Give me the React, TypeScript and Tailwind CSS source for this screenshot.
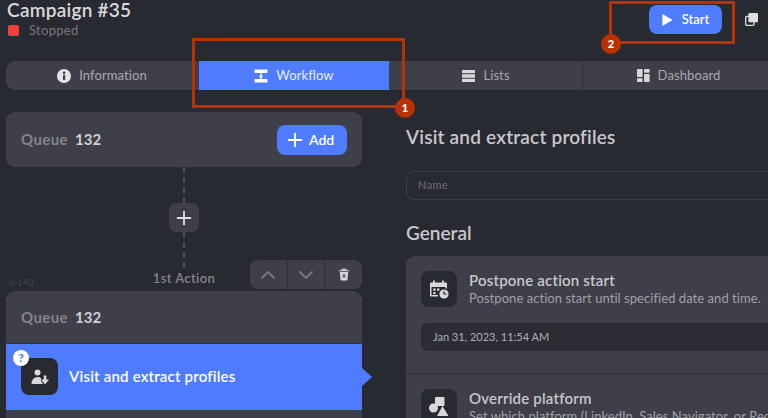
import { ChevronUp, ChevronDown, Plus } from 'lucide-react'

const font = { fontFamily: 'Lato, sans-serif' }

function InfoIcon() {
  return (
    <svg viewBox="0 0 14 14" className="w-[14px] h-[14px]">
      <circle cx="7" cy="7" r="7" fill="#e4e4e6" />
      <rect x="6" y="6" width="2.2" height="5" fill="#3e3f48" />
      <circle cx="7.1" cy="3.9" r="1.3" fill="#3e3f48" />
    </svg>
  )
}

function WorkflowIcon() {
  return (
    <svg viewBox="0 0 14 14" className="w-[14px] h-[14px]" fill="#fff">
      <rect x="0.5" y="0.5" width="13" height="3.6" rx="0.8" />
      <rect x="0.5" y="10" width="13" height="3.6" rx="0.8" />
      <rect x="6.4" y="4" width="1.2" height="6" />
      <path d="M4.8 6.8h4.4L7 9.4z" />
    </svg>
  )
}

function ListIcon() {
  return (
    <svg viewBox="0 0 14 14" className="w-[13px] h-[14px]" fill="#d8d8da">
      <rect x="0" y="0.5" width="14" height="3.6" rx="0.6" />
      <rect x="0" y="5.2" width="14" height="3.6" rx="0.6" />
      <rect x="0" y="9.9" width="14" height="3.6" rx="0.6" />
    </svg>
  )
}

function DashboardIcon() {
  return (
    <svg viewBox="0 0 14 14" className="w-[13px] h-[13px]" fill="#d8d8da">
      <rect x="0" y="0" width="6" height="8.5" rx="0.8" />
      <rect x="0" y="10" width="6" height="4" rx="0.8" />
      <rect x="7.6" y="0" width="6" height="4" rx="0.8" />
      <rect x="7.6" y="5.5" width="6" height="8.5" rx="0.8" />
    </svg>
  )
}

function CopyIcon() {
  return (
    <svg viewBox="0 0 14 14" className="w-[13px] h-[13px]">
      <rect x="0.7" y="3.7" width="9" height="9.6" rx="1.2" fill="none" stroke="#e0e0e2" strokeWidth="1.4" />
      <rect x="3.6" y="0" width="10.4" height="10" rx="1.4" fill="#e0e0e2" />
    </svg>
  )
}

function TrashIcon() {
  return (
    <svg viewBox="0 0 14 14" className="w-[12px] h-[13px]">
      <path d="M1 2.6h12M5 2.4V1h4v1.4" fill="none" stroke="#d8d8da" strokeWidth="1.3" />
      <path d="M2.2 4h9.6l-.7 9.2a.8.8 0 0 1-.8.8H3.7a.8.8 0 0 1-.8-.8z" fill="#d8d8da" />
      <path d="M5.3 6.7l3.4 3.8M8.7 6.7l-3.4 3.8" stroke="#3e3f48" strokeWidth="1.2" />
    </svg>
  )
}

function ExtractIcon() {
  return (
    <svg viewBox="0 0 18 16" className="w-[18px] h-[16px]" fill="#d8d8da">
      <circle cx="6.5" cy="3.5" r="3" />
      <path d="M0.5 15c0-4 2.5-7 6-7 1.5 0 2.6.4 3.5 1.2V12l2 3z" />
      <path d="M12.7 6.5h2.6v4h2.7l-4 5-4-5h2.700z" />
    </svg>
  )
}

function CalendarIcon() {
  return (
    <svg viewBox="0 0 20 20" className="w-[20px] h-[20px]">
      <path d="M1 4.5a1 1 0 0 1 1-1h15a1 1 0 0 1 1 1v5h-1.500V8H2.500v8h6.500v1.500H2a1 1 0 0 1-1-1z" fill="#d8d8da" />
      <rect x="4" y="1.5" width="1.8" height="3.5" fill="#d8d8da" />
      <rect x="13" y="1.5" width="1.8" height="3.5" fill="#d8d8da" />
      <rect x="4.2" y="9.5" width="2.4" height="2.2" fill="#d8d8da" />
      <rect x="8" y="9.5" width="2.4" height="2.2" fill="#d8d8da" />
      <rect x="4.2" y="13" width="2.4" height="2.2" fill="#d8d8da" />
      <circle cx="15" cy="15" r="4.6" fill="#d8d8da" />
      <path d="M15 12.3V15h2.6" fill="none" stroke="#282a32" strokeWidth="1.2" />
    </svg>
  )
}

function ShapesIcon() {
  return (
    <svg viewBox="0 0 20 20" className="w-[20px] h-[20px]" fill="#d8d8da">
      <rect x="6" y="0" width="9.5" height="9" rx="1" />
      <circle cx="4.5" cy="11" r="4.5" />
      <path d="M13.5 9l6 10H8z" />
    </svg>
  )
}

function Badge({ n, className }: { n: string; className: string }) {
  return (
    <div
      className={`absolute w-[20px] h-[20px] rounded-full bg-[#b83200] text-white text-[11px] font-black flex items-center justify-center ${className}`}
    >
      {n}
    </div>
  )
}

function QueueLabel() {
  return (
    <div className="flex items-baseline gap-[7px] text-[15px] tracking-[0.4px]">
      <span className="text-[#85858b] font-bold">Queue</span>
      <span className="text-[#d0d0d3] font-bold tracking-[0.1px]">132</span>
    </div>
  )
}

function DashedLine({ h }: { h: string }) {
  return <div className={`w-0 border-l-2 border-dashed border-[#4a4b53] ${h}`} />
}

export default function App() {
  return (
    <div className="relative w-[768px] h-[418px] overflow-hidden bg-[#282a32] text-[#d8d8da]" style={font}>
      {/* Header */}
      <div className="flex justify-between h-[61px]">
        <div className="pl-[7px]">
          <div className="text-[19px] leading-[20px] font-semibold text-[#d8d8da] tracking-[0.25px]">Campaign #35</div>
          <div className="flex items-center gap-[10px] mt-[2px] pl-[1px]">
            <div className="w-[11px] h-[11px] rounded-[2px] bg-[#f0403c]" />
            <span className="text-[13px] leading-[16px] text-[#78787e] tracking-[0.3px]">Stopped</span>
          </div>
        </div>
        <div className="flex items-start pt-[5px] pr-[10px] gap-[23px]">
          <button className="w-[73px] h-[29px] rounded-[8px] bg-[#4f7cff] flex items-center justify-center gap-[9px] text-white text-[13px] font-semibold">
            <svg viewBox="0 0 12 14" className="w-[11px] h-[12px]" fill="#fff"><path d="M0 0l12 7-12 7z" /></svg>
            Start
          </button>
          <div className="pt-[8px]"><CopyIcon /></div>
        </div>
      </div>

      {/* Tabs */}
      <div className="flex w-[768px] h-[29px] pl-[6px] text-[13px] tracking-[0.1px] text-[#a8a8ad]">
        <div className="w-[192px] shrink-0 rounded-l-[9px] bg-[#3e3f48] flex items-center justify-center gap-[8px]">
          <InfoIcon />Information
        </div>
        <div className="w-[192px] shrink-0 bg-[#3e3f48] px-[1px]">
          <div className="h-full bg-[#4f7cff] text-[#e8eeff] flex items-center justify-center gap-[8px]">
            <WorkflowIcon />Workflow
          </div>
        </div>
        <div className="w-[192px] shrink-0 bg-[#3e3f48] flex items-center justify-center gap-[8px]">
          <ListIcon />Lists
        </div>
        <div className="w-[192px] shrink-0 bg-[#3e3f48] border-l border-[#2d2e36] flex items-center justify-center gap-[8px]">
          <DashboardIcon />Dashboard
        </div>
      </div>

      {/* Body */}
      <div className="flex pt-[22px] pl-[6px]">
        {/* Workflow column */}
        <div className="w-[356px] shrink-0 flex flex-col">
          <div className="h-[55px] rounded-[9px] bg-[#3e3f48] flex items-center justify-between pl-[15px] pr-[15px]">
            <QueueLabel />
            <button className="w-[70px] h-[30px] rounded-[8px] bg-[#4f7cff] flex items-center pl-[7px] gap-[3px] text-white text-[14px] font-semibold">
              <Plus size={22} strokeWidth={2} />
              Add
            </button>
          </div>
          <div className="flex flex-col items-center">
            <DashedLine h="h-[36px]" />
            <div className="w-[30px] h-[29px] rounded-[7px] bg-[#3e3f48] flex items-center justify-center text-[#e0e0e2]">
              <Plus size={22} strokeWidth={2} />
            </div>
            <DashedLine h="h-[36px]" />
          </div>
          <div className="relative h-[23px]">
            <div className="absolute left-[1px] top-[8px] text-[9px] text-[#42434b]">id-140</div>
            <div className="absolute left-0 right-0 top-[1px] text-center text-[13px] font-semibold text-[#85858b] tracking-[0.4px]">1st Action</div>
            <div className="absolute right-0 -top-[8px] w-[112px] h-[29px] rounded-[8px] bg-[#3e3f48] flex divide-x divide-[#2d2e36]">
              <div className="flex-1 flex items-center justify-center text-[#77777d]"><ChevronUp size={24} strokeWidth={2} /></div>
              <div className="flex-1 flex items-center justify-center text-[#77777d]"><ChevronDown size={24} strokeWidth={2} /></div>
              <div className="flex-1 flex items-center justify-center"><TrashIcon /></div>
            </div>
          </div>
          <div className="rounded-t-[9px] bg-[#3e3f48] h-[140px]">
            <div className="h-[52px] flex items-center pl-[15px]"><QueueLabel /></div>
            <div className="relative h-[67px] bg-[#4f7cff] border-t border-[#2d2e36] flex items-center gap-[11px] pl-[15px]">
              <div className="relative w-[37px] h-[37px] rounded-[8px] bg-[#282a32] flex items-center justify-center -mt-[1px]">
                <ExtractIcon />
                <div className="absolute -left-[8px] -top-[8px] w-[16px] h-[16px] rounded-full bg-white text-[#4f7cff] text-[12px] font-black leading-[16px] text-center">?</div>
              </div>
              <span className="text-[15px] leading-[18px] font-semibold text-white tracking-[0.2px] -mt-[2px]">Visit and extract profiles</span>
              <div className="absolute -right-[10px] top-[24px] w-0 h-0 border-y-[9px] border-y-transparent border-l-[10px] border-l-[#4f7cff]" />
            </div>
          </div>
        </div>

        {/* Settings column */}
        <div className="w-[420px] shrink-0 ml-[44px]">
          <h2 className="mt-[13px] text-[19px] leading-[24px] font-semibold text-[#c8c8cb] tracking-[0.2px]">Visit and extract profiles</h2>
          <div className="mt-[22px] h-[29px] rounded-[8px] border border-[#3e3f48] flex items-center pl-[11px] text-[11px] text-[#6e6e74] tracking-[0.4px]">Name</div>
          <h3 className="mt-[22px] text-[19px] leading-[22px] font-semibold text-[#c8c8cb]">General</h3>
          <div className="mt-[12px] rounded-t-[9px] bg-[#3e3f48] h-[170px]">
            <div className="h-[118px] px-[15px] pt-[15px] border-b border-[#2d2e36]">
              <div className="flex gap-[12px]">
                <div className="w-[36px] h-[36px] shrink-0 rounded-[8px] bg-[#282a32] flex items-center justify-center"><CalendarIcon /></div>
                <div>
                  <div className="text-[15px] leading-[18px] font-semibold text-[#c8c8cb] tracking-[0.2px]">Postpone action start</div>
                  <div className="text-[13px] leading-[18px] text-[#a0a0a5] tracking-[0.05px] whitespace-nowrap">Postpone action start until specified date and time.</div>
                </div>
              </div>
              <div className="mt-[16px] h-[28px] rounded-[6px] bg-[#2b2c34] flex items-center pl-[12px] text-[11px] text-[#b0b0b5]">Jan 31, 2023, 11:54 AM</div>
            </div>
            <div className="px-[15px] pt-[15px] flex gap-[12px]">
              <div className="w-[36px] h-[36px] shrink-0 rounded-[8px] bg-[#282a32] flex items-center justify-center"><ShapesIcon /></div>
              <div>
                <div className="text-[15px] leading-[18px] font-semibold text-[#c8c8cb] tracking-[0.2px]">Override platform</div>
                <div className="text-[13px] leading-[18px] text-[#a0a0a5] tracking-[0.05px] whitespace-nowrap">Set which platform (LinkedIn, Sales Navigator, or Recruiter)</div>
              </div>
            </div>
          </div>
        </div>
      </div>

      {/* Annotations */}
      <div className="absolute left-[192px] top-[38px] w-[213px] h-[70px] border-[3px] border-[#b83200]" />
      <Badge n="1" className="left-[395px] top-[98px]" />
      <div className="absolute left-[609px] top-[1px] w-[126px] h-[43px] border-[3px] border-[#b83200]" />
      <Badge n="2" className="left-[601px] top-[34px]" />
    </div>
  )
}
